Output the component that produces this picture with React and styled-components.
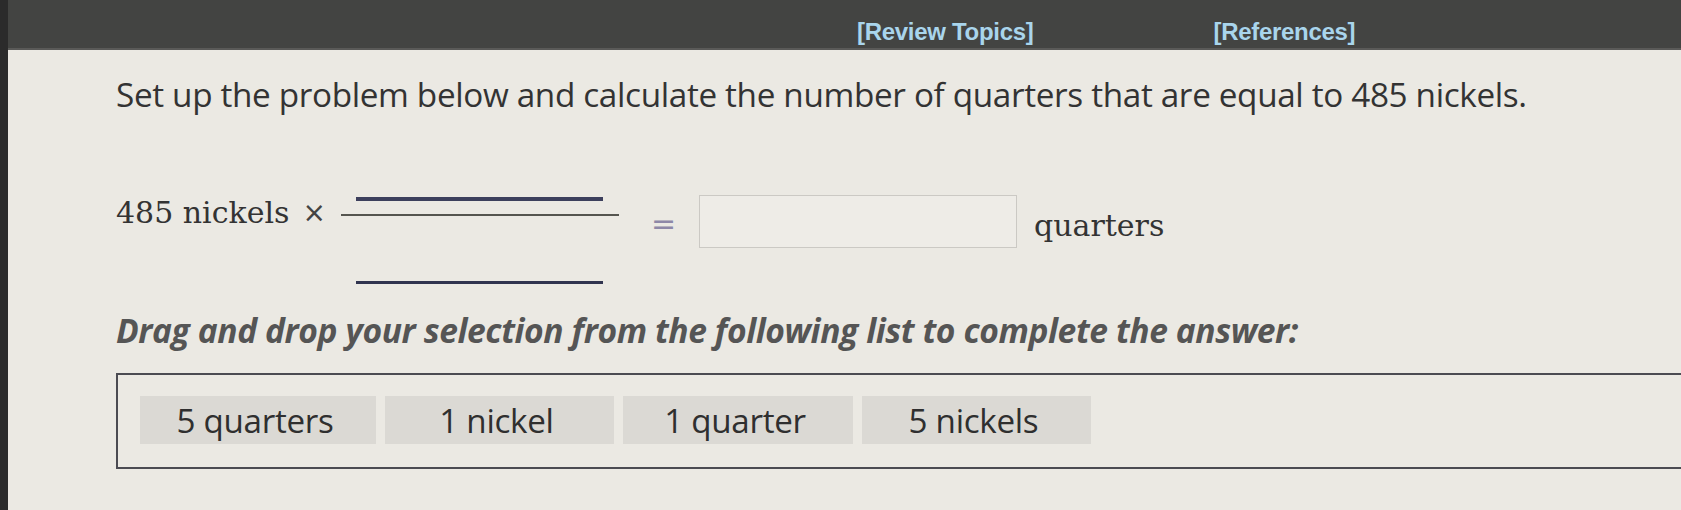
import React from "react";
import styled, { createGlobalStyle } from "styled-components";

const Global = createGlobalStyle`
  html, body { margin: 0; padding: 0; }
  body {
    background: #2b2b2b;
    overflow: hidden;
    width: 1681px;
    height: 510px;
  }
`;

const Screen = styled.div`
  display: flex;
  flex-direction: column;
  height: 510px;
  margin-left: 8px;
  background: #ebe9e3;
  overflow: hidden;
`;

const Header = styled.header`
  display: flex;
  align-items: flex-end;
  gap: 180px;
  height: 50px;
  flex-shrink: 0;
  box-sizing: border-box;
  padding: 0 0 2px 849px;
  background: #434442;
  border-bottom: 2px solid #5a5a58;
`;

const NavLink = styled.a`
  font-family: "Liberation Sans", Arial, sans-serif;
  font-weight: 700;
  font-size: 24px;
  letter-spacing: -0.3px;
  color: #a9d5ec;
  text-decoration: none;
  cursor: pointer;
`;

const Content = styled.main`
  display: flex;
  flex-direction: column;
  padding: 22px 0 0 108px;
`;

const Prompt = styled.p`
  margin: 0;
  font-family: "Open Sans", "Noto Sans", sans-serif;
  font-size: 33.3px;
  line-height: 44px;
  color: #333333;
  letter-spacing: -0.35px;
  white-space: nowrap;
`;

const EquationRow = styled.div`
  display: flex;
  align-items: center;
  margin-top: 30px;
`;

const MathText = styled.span`
  font-family: "DejaVu Serif", "Liberation Serif", serif;
  font-size: 30px;
  color: #333;
  margin-top: ${(p) => p.$offset || 0}px;
  white-space: nowrap;
`;

const Times = styled.span`
  font-family: "DejaVu Sans", sans-serif;
  font-size: 28px;
  color: #444;
  margin: -6px 15px 0 13px;
`;

const Fraction = styled.div`
  display: flex;
  flex-direction: column;
  align-items: center;
  width: 278px;
`;

const Slot = styled.div`
  width: 247px;
  height: ${(p) => p.$h}px;
  border-bottom: ${(p) => p.$line}px solid ${(p) => p.$color};
`;

const Bar = styled.div`
  width: 278px;
  height: 2px;
  background: #55554f;
  margin: ${(p) => p.$m};
`;

const Equals = styled.span`
  font-family: "DejaVu Sans", sans-serif;
  font-size: 30px;
  color: #8e88a8;
  margin: 16px 23px 0 32px;
`;

const AnswerBox = styled.div`
  width: 316px;
  height: 51px;
  margin: 12px 17px 0 0;
  border: 1px solid #cbc9c4;
  background: #eeece7;
`;

const Instruction = styled.p`
  margin: 24px 0 0 0;
  font-family: "Open Sans", "Noto Sans", sans-serif;
  font-weight: 700;
  font-style: italic;
  font-size: 33.6px;
  line-height: 44px;
  color: #555555;
  letter-spacing: -0.4px;
  white-space: nowrap;
`;

const ChoiceTray = styled.div`
  display: flex;
  gap: 9px;
  margin-top: 21px;
  width: 1700px;
  height: 96px;
  box-sizing: border-box;
  padding: 21px 0 0 22px;
  border: 2px solid #4b4b52;
  border-right: none;
`;

const Choice = styled.div`
  display: flex;
  align-items: center;
  justify-content: center;
  width: ${(p) => p.$w}px;
  height: 48px;
  box-sizing: border-box;
  padding-right: 6px;
  background: #dbd9d4;
  font-family: "Open Sans", "Noto Sans", sans-serif;
  font-size: 33.2px;
  color: #2f2f2f;
  letter-spacing: -0.3px;
  cursor: grab;
`;

const choices = [
  { label: "5 quarters", w: 236 },
  { label: "1 nickel", w: 229 },
  { label: "1 quarter", w: 230 },
  { label: "5 nickels", w: 229 },
];

export default function App() {
  return (
    <>
      <Global />
      <Screen>
        <Header>
          <NavLink>[Review Topics]</NavLink>
          <NavLink>[References]</NavLink>
        </Header>
        <Content>
          <Prompt>
            Set up the problem below and calculate the number of quarters that are equal to 485 nickels.
          </Prompt>
          <EquationRow>
            <MathText $offset={-6}>485 nickels</MathText>
            <Times>×</Times>
            <Fraction>
              <Slot $h={51} $line={4} $color="#3c3f5c" />
              <Bar $m="13px 0 2px 0" />
              <Slot $h={63} $line={3} $color="#30344f" />
            </Fraction>
            <Equals>=</Equals>
            <AnswerBox />
            <MathText $offset={20}>quarters</MathText>
          </EquationRow>
          <Instruction>
            Drag and drop your selection from the following list to complete the answer:
          </Instruction>
          <ChoiceTray>
            {choices.map((c) => (
              <Choice key={c.label} $w={c.w}>
                {c.label}
              </Choice>
            ))}
          </ChoiceTray>
        </Content>
      </Screen>
    </>
  );
}
